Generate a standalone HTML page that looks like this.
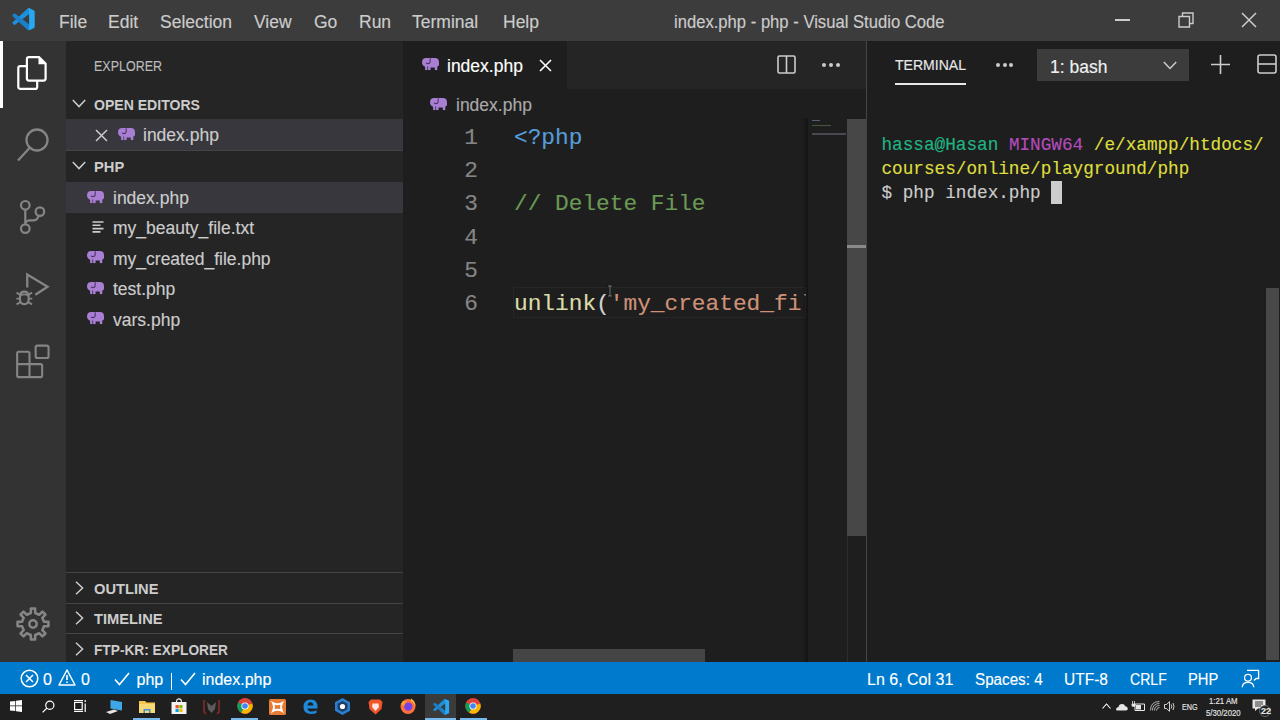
<!DOCTYPE html>
<html><head><meta charset="utf-8">
<style>
*{margin:0;padding:0;box-sizing:border-box}
html,body{width:1280px;height:720px;overflow:hidden;background:#1e1e1e;font-family:"Liberation Sans",sans-serif;color:#cccccc}
.a{position:absolute}
.t{position:absolute;white-space:nowrap;line-height:1;-webkit-text-stroke:0.15px currentColor}
.mono{font-family:"Liberation Mono",monospace}
svg{position:absolute;overflow:visible}
</style></head><body>

<!-- Title bar -->
<div class="a" style="left:0;top:0;width:1280px;height:41px;background:#3c3c3c"></div>
<svg width="0" height="0" style="position:absolute"><defs><symbol id="vsl" viewBox="0 0 100 100">
<path d="M96.46 10.80 L75.86 0.87 C73.48 -0.28 70.63 0.20 68.76 2.07 L1.33 63.55 C-0.48 65.20 -0.48 68.06 1.34 69.71 L6.85 74.72 C8.34 76.07 10.57 76.17 12.17 74.96 L93.38 13.36 C96.10 11.29 100 13.23 100 16.65 V16.41 C100 14.01 98.62 11.82 96.46 10.80 Z" fill="#1f8fdc"/>
<path d="M96.46 89.20 L75.86 99.13 C73.48 100.28 70.63 99.80 68.76 97.93 L1.33 36.45 C-0.48 34.80 -0.48 31.94 1.34 30.29 L6.85 25.28 C8.34 23.93 10.57 23.83 12.17 25.04 L93.38 86.64 C96.10 88.71 100 86.77 100 83.35 V83.59 C100 85.99 98.62 88.18 96.46 89.20 Z" fill="#1a80cc"/>
<path d="M75.86 99.13 C73.48 100.28 70.63 99.80 68.76 97.93 C71.06 100.23 75 98.60 75 95.34 V4.66 C75 1.40 71.06 -0.23 68.76 2.07 C70.63 0.20 73.48 -0.28 75.86 0.87 L96.46 10.79 C98.62 11.83 100 14.01 100 16.41 V83.59 C100 85.99 98.62 88.17 96.46 89.21 Z" fill="#29a8f2"/>
</symbol></defs></svg>
<svg style="left:12.4px;top:8.3px" width="23" height="22.4"><use href="#vsl"/></svg>
<div class="t" style="left:59px;top:13.5px;font-size:17.5px;color:#cccccc">File</div>
<div class="t" style="left:108px;top:13.5px;font-size:17.5px;color:#cccccc">Edit</div>
<div class="t" style="left:160px;top:13.5px;font-size:17.5px;color:#cccccc">Selection</div>
<div class="t" style="left:254px;top:13.5px;font-size:17.5px;color:#cccccc">View</div>
<div class="t" style="left:314px;top:13.5px;font-size:17.5px;color:#cccccc">Go</div>
<div class="t" style="left:359px;top:13.5px;font-size:17.5px;color:#cccccc">Run</div>
<div class="t" style="left:412px;top:13.5px;font-size:17.5px;color:#cccccc">Terminal</div>
<div class="t" style="left:503px;top:13.5px;font-size:17.5px;color:#cccccc">Help</div>
<div class="t" style="left:674px;top:13.5px;font-size:17.5px;color:#cccccc;transform-origin:0 0;transform:scaleX(0.95)">index.php - php - Visual Studio Code</div>
<!-- window controls -->
<div class="a" style="left:1114.5px;top:19.3px;width:15.5px;height:1.5px;background:#cccccc"></div>
<svg style="left:1178px;top:12px" width="16" height="16" viewBox="0 0 16 16"><path d="M1 4.5 H11.5 V15 H1 Z M4.5 4.5 V1 H15 V11.5 H11.5" fill="none" stroke="#cccccc" stroke-width="1.4"/></svg>
<svg style="left:1241px;top:12px" width="16" height="16" viewBox="0 0 16 16"><path d="M1 1 L15 15 M15 1 L1 15" stroke="#cccccc" stroke-width="1.5"/></svg>

<!-- Activity bar -->
<div class="a" style="left:0;top:41px;width:66px;height:621px;background:#333333"></div>
<div class="a" style="left:0;top:41px;width:2.5px;height:67px;background:#ffffff"></div>
<svg style="left:16px;top:55px" width="32" height="36" viewBox="0 0 32 36">
  <path d="M10.9 11.1 H4.3 A2 2 0 0 0 2.3 13.1 V31.9 A2 2 0 0 0 4.3 33.9 H19.2 A2 2 0 0 0 21.2 31.9 V25.6" fill="none" stroke="#fff" stroke-width="2.2"/>
  <path d="M10.9 4.1 A2 2 0 0 1 12.9 2.1 H23 L29.6 8.7 V23.6 A2 2 0 0 1 27.6 25.6 H12.9 A2 2 0 0 1 10.9 23.6 Z" fill="none" stroke="#fff" stroke-width="2.2"/>
  <path d="M22.5 2.5 V9.2 H29.2 Z" fill="#fff"/>
</svg>
<svg style="left:16px;top:127px" width="36" height="36" viewBox="0 0 36 36">
  <circle cx="21" cy="13" r="10.5" fill="none" stroke="#858585" stroke-width="2.3"/>
  <path d="M13.5 21 L2 33.5" stroke="#858585" stroke-width="2.3"/>
</svg>
<svg style="left:10px;top:190px" width="46" height="46" viewBox="10 190 46 46">
  <circle cx="25.3" cy="205.3" r="4.3" fill="none" stroke="#858585" stroke-width="2.2"/>
  <circle cx="25.3" cy="228.6" r="4.3" fill="none" stroke="#858585" stroke-width="2.2"/>
  <circle cx="39.9" cy="211.6" r="4.3" fill="none" stroke="#858585" stroke-width="2.2"/>
  <path d="M25.3 209.6 V224.3 M38.6 215.7 Q37.5 220.4 33 220.4 H29.5 Q25.6 220.6 25.3 224" fill="none" stroke="#858585" stroke-width="2.2"/>
</svg>
<svg style="left:10px;top:266px" width="46" height="46" viewBox="10 266 46 46">
  <path d="M27.25 287.6 V274.5 L47.6 286.8 L35.3 294.8" fill="none" stroke="#858585" stroke-width="2.3"/>
  <path d="M20 296.2 Q20 291.6 24.3 291.6 Q28.6 291.6 28.6 296.2 V299.6 Q28.6 304.2 24.3 304.2 Q20 304.2 20 299.6 Z" fill="none" stroke="#858585" stroke-width="2.1"/>
  <path d="M20.6 295.4 Q24.3 293.2 28 295.4" fill="none" stroke="#858585" stroke-width="1.8"/>
  <path d="M16.6 292.6 L20 294.8 M16.4 298.6 H20 M16.6 304.4 L20 302.2 M32 292.6 L28.6 294.8 M32.2 298.6 H28.6 M32 304.4 L28.6 302.2" fill="none" stroke="#858585" stroke-width="1.9"/>
</svg>
<svg style="left:10px;top:336px" width="46" height="46" viewBox="10 336 46 46">
  <path d="M17.15 353.5 Q17.15 351.75 18.9 351.75 H27.8 Q29.5 351.75 29.5 353.5 V364.1 H40.4 Q42.15 364.1 42.15 365.85 V375.4 Q42.15 377.15 40.4 377.15 H18.9 Q17.15 377.15 17.15 375.4 Z M17.15 364.1 H29.5 V377.15" fill="none" stroke="#858585" stroke-width="2.1"/>
  <rect x="35.65" y="345.65" width="12.9" height="12.3" rx="1.8" fill="none" stroke="#858585" stroke-width="2.1"/>
</svg>
<svg style="left:16px;top:607px" width="34" height="34" viewBox="0 0 34 34">
  <path d="M14.81 6.02 L14.92 1.54 L19.08 1.54 L19.19 6.02 L23.22 7.69 L26.46 4.60 L29.40 7.54 L26.31 10.78 L27.98 14.81 L32.46 14.92 L32.46 19.08 L27.98 19.19 L26.31 23.22 L29.40 26.46 L26.46 29.40 L23.22 26.31 L19.19 27.98 L19.08 32.46 L14.92 32.46 L14.81 27.98 L10.78 26.31 L7.54 29.40 L4.60 26.46 L7.69 23.22 L6.02 19.19 L1.54 19.08 L1.54 14.92 L6.02 14.81 L7.69 10.78 L4.60 7.54 L7.54 4.60 L10.78 7.69 Z" fill="none" stroke="#858585" stroke-width="2.6" stroke-linejoin="round"/>
  <circle cx="17" cy="17" r="3.7" fill="none" stroke="#858585" stroke-width="2.5"/>
</svg>

<!-- Sidebar -->
<div class="a" style="left:66px;top:41px;width:337px;height:621px;background:#252526"></div>
<div class="t" style="left:94px;top:58.5px;font-size:14.7px;color:#bbbbbb;transform-origin:0 0;transform:scaleX(0.85)">EXPLORER</div>

<svg width="0" height="0" style="position:absolute"><defs>
<symbol id="el" viewBox="0 0 17 12.2">
<path d="M4.3 0 H13 Q17 0 17 4.2 V6.8 Q17 8.3 15.3 8.6 V12.2 H12.8 V9.4 H8.6 V12.2 H6.1 V8.4 H5.4 V12.2 H3.1 V8.8 Q0 7.8 0 4.3 Q0 0 4.3 0 Z" fill="#a87fd2"/>
<path d="M8.2 0.2 V3.2 Q8.2 5.6 5.6 5.6 Q4.4 5.6 4 4.8" fill="none" stroke="#4e3569" stroke-width="1.1"/>
</symbol>
</defs></svg>

<!-- OPEN EDITORS -->
<svg style="left:72px;top:99px" width="14" height="9" viewBox="0 0 14 9"><path d="M0.8 1 L7 7.6 L13.2 1" fill="none" stroke="#cccccc" stroke-width="1.5"/></svg>
<div class="t" style="left:94px;top:98px;font-size:14.7px;font-weight:bold;-webkit-text-stroke:0;color:#cccccc;transform-origin:0 0;transform:scaleX(0.957)">OPEN EDITORS</div>
<div class="a" style="left:66px;top:119px;width:337px;height:31px;background:#37373d"></div>
<svg style="left:95px;top:129px" width="13" height="13" viewBox="0 0 13 13"><path d="M1 1 L12 12 M12 1 L1 12" stroke="#cccccc" stroke-width="1.5"/></svg>
<svg style="left:117.8px;top:128px" width="17" height="12.2"><use href="#el"/></svg>
<div class="t" style="left:143px;top:127px;font-size:17.5px;color:#cccccc">index.php</div>
<div class="a" style="left:66px;top:150px;width:337px;height:1px;background:#454547"></div>

<!-- PHP -->
<svg style="left:72px;top:161px" width="14" height="9" viewBox="0 0 14 9"><path d="M0.8 1 L7 7.6 L13.2 1" fill="none" stroke="#cccccc" stroke-width="1.5"/></svg>
<div class="t" style="left:94px;top:160px;font-size:14.7px;font-weight:bold;-webkit-text-stroke:0;color:#cccccc">PHP</div>
<div class="a" style="left:66px;top:182px;width:337px;height:31px;background:#37373d"></div>
<svg style="left:87px;top:190.5px" width="17" height="12.2"><use href="#el"/></svg>
<div class="t" style="left:113px;top:190px;font-size:17.5px;color:#cccccc">index.php</div>
<svg style="left:92px;top:221px" width="12" height="13" viewBox="0 0 12 13"><path d="M0.5 1 H11.5 M0.5 4.3 H8.5 M0.5 7.6 H11.5 M0.5 10.9 H8.5" stroke="#cccccc" stroke-width="1.6"/></svg>
<div class="t" style="left:113px;top:220px;font-size:17.5px;color:#cccccc">my_beauty_file.txt</div>
<svg style="left:87px;top:251px" width="17" height="12.2"><use href="#el"/></svg>
<div class="t" style="left:113px;top:251px;font-size:17.5px;color:#cccccc">my_created_file.php</div>
<svg style="left:87px;top:281.5px" width="17" height="12.2"><use href="#el"/></svg>
<div class="t" style="left:113px;top:281px;font-size:17.5px;color:#cccccc">test.php</div>
<svg style="left:87px;top:311.8px" width="17" height="12.2"><use href="#el"/></svg>
<div class="t" style="left:113px;top:312px;font-size:17.5px;color:#cccccc">vars.php</div>

<!-- bottom sections -->
<div class="a" style="left:66px;top:572px;width:337px;height:1px;background:#454547"></div>
<svg style="left:75px;top:581px" width="9" height="14" viewBox="0 0 9 14"><path d="M1 0.8 L7.6 7 L1 13.2" fill="none" stroke="#cccccc" stroke-width="1.5"/></svg>
<div class="t" style="left:94px;top:581.8px;font-size:14.7px;font-weight:bold;-webkit-text-stroke:0;color:#cccccc">OUTLINE</div>
<div class="a" style="left:66px;top:603px;width:337px;height:1px;background:#454547"></div>
<svg style="left:75px;top:611px" width="9" height="14" viewBox="0 0 9 14"><path d="M1 0.8 L7.6 7 L1 13.2" fill="none" stroke="#cccccc" stroke-width="1.5"/></svg>
<div class="t" style="left:94px;top:611.8px;font-size:14.7px;font-weight:bold;-webkit-text-stroke:0;color:#cccccc">TIMELINE</div>
<div class="a" style="left:66px;top:633px;width:337px;height:1px;background:#454547"></div>
<svg style="left:75px;top:642px" width="9" height="14" viewBox="0 0 9 14"><path d="M1 0.8 L7.6 7 L1 13.2" fill="none" stroke="#cccccc" stroke-width="1.5"/></svg>
<div class="t" style="left:94px;top:642.8px;font-size:14.7px;font-weight:bold;-webkit-text-stroke:0;color:#cccccc;transform-origin:0 0;transform:scaleX(0.933)">FTP-KR: EXPLORER</div>

<!-- Editor -->
<div class="a" style="left:403px;top:41px;width:463px;height:48px;background:#252526"></div>
<div class="a" style="left:403px;top:41px;width:164px;height:48px;background:#1e1e1e"></div>
<svg style="left:421.6px;top:58.3px" width="17" height="12.2"><use href="#el"/></svg>
<div class="t" style="left:447px;top:58px;font-size:17.5px;color:#ffffff">index.php</div>
<svg style="left:539px;top:59px" width="13" height="13" viewBox="0 0 13 13"><path d="M1 1 L12 12 M12 1 L1 12" stroke="#ffffff" stroke-width="1.6"/></svg>
<svg style="left:777px;top:55px" width="19" height="19" viewBox="0 0 19 19"><rect x="1" y="1" width="17" height="17" rx="1.5" fill="none" stroke="#cccccc" stroke-width="1.6"/><path d="M9.5 1 V18" stroke="#cccccc" stroke-width="1.6"/></svg>
<div class="a" style="left:822px;top:63px;width:4px;height:4px;border-radius:2px;background:#cccccc"></div>
<div class="a" style="left:829px;top:63px;width:4px;height:4px;border-radius:2px;background:#cccccc"></div>
<div class="a" style="left:836px;top:63px;width:4px;height:4px;border-radius:2px;background:#cccccc"></div>

<svg style="left:430px;top:97.8px" width="17" height="12.2"><use href="#el"/></svg>
<div class="t" style="left:456px;top:97.2px;font-size:17.5px;color:#a9a9a9">index.php</div>

<div class="t mono" style="left:440px;top:126.5px;width:38px;text-align:right;font-size:22.8px;color:#858585">1</div>
<div class="t mono" style="left:440px;top:159.5px;width:38px;text-align:right;font-size:22.8px;color:#858585">2</div>
<div class="t mono" style="left:440px;top:192.5px;width:38px;text-align:right;font-size:22.8px;color:#858585">3</div>
<div class="t mono" style="left:440px;top:226.5px;width:38px;text-align:right;font-size:22.8px;color:#858585">4</div>
<div class="t mono" style="left:440px;top:259.5px;width:38px;text-align:right;font-size:22.8px;color:#858585">5</div>
<div class="t mono" style="left:440px;top:292.5px;width:38px;text-align:right;font-size:22.8px;color:#858585">6</div>

<div class="a" style="left:513px;top:287px;width:293px;height:31px;border:1.5px solid #262626"></div>
<div class="t mono" style="left:514px;top:126.5px;font-size:22.8px;color:#569cd6">&lt;?php</div>
<div class="t mono" style="left:514px;top:192.5px;font-size:22.8px;color:#6a9955">// Delete File</div>
<div class="a" style="left:514px;top:280px;width:292px;height:45px;overflow:hidden">
<div class="t mono" style="left:0;top:12.5px;font-size:22.8px;color:#dcdcaa">unlink<span style="color:#d4d4d4">(</span><span style="color:#ce9178">'my_created_file.php'</span><span style="color:#d4d4d4">);</span></div>
</div>

<svg style="left:606px;top:285px" width="8" height="12" viewBox="0 0 8 12"><path d="M1.5 1 H6.5 M4 1 V11 M1.5 11 H6.5" stroke="#0a0a0a" stroke-width="2.2" opacity=".8"/><path d="M2 1 H6 M4 1 V11 M2 11 H6" stroke="#9a9a9a" stroke-width="0.8"/></svg>
<!-- minimap & scrollbar -->
<div class="a" style="left:802px;top:118px;width:6px;height:544px;background:linear-gradient(to right,rgba(0,0,0,0),rgba(0,0,0,0.35))"></div>
<div class="a" style="left:812px;top:119.5px;width:8px;height:1.5px;background:#6f8fb0;opacity:.6"></div>
<div class="a" style="left:812px;top:124.8px;width:19px;height:1.5px;background:#6f8f60;opacity:.5"></div>
<div class="a" style="left:812px;top:133.2px;width:34px;height:1.5px;background:#8a8aa0;opacity:.4"></div>
<div class="a" style="left:846.5px;top:118.5px;width:19.5px;height:417px;background:#474747"></div>
<div class="a" style="left:846.5px;top:245px;width:19.5px;height:3px;background:#8a8a8a"></div>
<div class="a" style="left:513px;top:649px;width:192px;height:13px;background:#454545"></div>
<div class="a" style="left:846.5px;top:535.5px;width:1px;height:126.5px;background:#2e2e2e"></div>

<!-- divider -->
<div class="a" style="left:866px;top:41px;width:1px;height:621px;background:#454545"></div>


<!-- Terminal panel -->
<div class="t" style="left:895px;top:58px;font-size:14.7px;color:#e7e7e7;transform-origin:0 0;transform:scaleX(0.956)">TERMINAL</div>
<div class="a" style="left:895px;top:83px;width:71px;height:2px;background:#e7e7e7"></div>
<div class="a" style="left:996px;top:63px;width:4px;height:4px;border-radius:2px;background:#cccccc"></div>
<div class="a" style="left:1002.5px;top:63px;width:4px;height:4px;border-radius:2px;background:#cccccc"></div>
<div class="a" style="left:1009px;top:63px;width:4px;height:4px;border-radius:2px;background:#cccccc"></div>
<div class="a" style="left:1037px;top:49px;width:152px;height:32px;background:#3c3c3c"></div>
<div class="t" style="left:1050px;top:58.5px;font-size:17.5px;color:#f0f0f0">1: bash</div>
<svg style="left:1163px;top:61px" width="14" height="9" viewBox="0 0 14 9"><path d="M0.8 1 L7 7.4 L13.2 1" fill="none" stroke="#cccccc" stroke-width="1.5"/></svg>
<svg style="left:1211px;top:55px" width="19" height="19" viewBox="0 0 19 19"><path d="M9.5 0 V19 M0 9.5 H19" stroke="#cccccc" stroke-width="1.6"/></svg>
<svg style="left:1257px;top:54px" width="20" height="20" viewBox="0 0 20 20"><rect x="1" y="1" width="18" height="18" rx="2" fill="none" stroke="#cccccc" stroke-width="1.6"/><path d="M1 10 H19" stroke="#cccccc" stroke-width="1.6"/></svg>

<div class="t mono" style="left:881.5px;top:136.5px;font-size:17.7px;color:#1fb583">hassa@Hasan <span style="color:#b24cbb">MINGW64</span> <span style="color:#dddd3e">/e/xampp/htdocs/</span></div>
<div class="t mono" style="left:881.5px;top:160.8px;font-size:17.7px;color:#dddd3e">courses/online/playground/php</div>
<div class="t mono" style="left:881.5px;top:184.8px;font-size:17.7px;color:#cccccc">$ php index.php </div>
<div class="a" style="left:1051px;top:181px;width:11px;height:23px;background:#cccccc"></div>
<div class="a" style="left:1266px;top:287.5px;width:13px;height:372.5px;background:#484848"></div>

<!-- Status bar -->
<div class="a" style="left:0;top:662px;width:1280px;height:32px;background:#007acc"></div>
<svg style="left:20px;top:669px" width="19" height="19" viewBox="0 0 19 19"><circle cx="9.5" cy="9.5" r="8.3" fill="none" stroke="#fff" stroke-width="1.5"/><path d="M6 6 L13 13 M13 6 L6 13" stroke="#fff" stroke-width="1.5"/></svg>
<div class="t" style="left:43px;top:672px;font-size:16px;color:#ffffff">0</div>
<svg style="left:58px;top:669px" width="18" height="17" viewBox="0 0 18 17"><path d="M9 1 L17 16 H1 Z" fill="none" stroke="#fff" stroke-width="1.5" stroke-linejoin="round"/><path d="M9 6 V11 M9 12.5 V14" stroke="#fff" stroke-width="1.6"/></svg>
<div class="t" style="left:81px;top:672px;font-size:16px;color:#ffffff">0</div>
<svg style="left:114px;top:672px" width="16" height="14" viewBox="0 0 16 14"><path d="M1 7.5 L5.5 12.5 L15 1" fill="none" stroke="#fff" stroke-width="1.6"/></svg>
<div class="t" style="left:136.5px;top:672px;font-size:16px;color:#ffffff">php</div>
<div class="a" style="left:171px;top:672.5px;width:1.3px;height:17.5px;background:#fff"></div>
<svg style="left:180px;top:672px" width="16" height="14" viewBox="0 0 16 14"><path d="M1 7.5 L5.5 12.5 L15 1" fill="none" stroke="#fff" stroke-width="1.6"/></svg>
<div class="t" style="left:202px;top:672px;font-size:16px;color:#ffffff">index.php</div>
<div class="t" style="left:867px;top:672px;font-size:16px;color:#ffffff">Ln 6, Col 31</div>
<div class="t" style="left:975px;top:672px;font-size:16px;color:#ffffff;transform-origin:0 0;transform:scaleX(0.95)">Spaces: 4</div>
<div class="t" style="left:1064px;top:672px;font-size:16px;color:#ffffff;transform-origin:0 0;transform:scaleX(0.97)">UTF-8</div>
<div class="t" style="left:1130px;top:672px;font-size:16px;color:#ffffff;transform-origin:0 0;transform:scaleX(0.88)">CRLF</div>
<div class="t" style="left:1188px;top:672px;font-size:16px;color:#ffffff;transform-origin:0 0;transform:scaleX(0.92)">PHP</div>
<svg style="left:1240px;top:668px" width="22" height="22" viewBox="1240 668 22 22"><path d="M1247 670.3 H1258.6 V678.5 H1256.2 L1253.8 680.6" fill="none" stroke="#fff" stroke-width="1.3"/><circle cx="1248" cy="677.8" r="3.4" fill="none" stroke="#fff" stroke-width="1.3"/><path d="M1242.2 687.2 Q1242.6 682.3 1248 682.3 Q1253.4 682.3 1253.8 687.2" fill="none" stroke="#fff" stroke-width="1.3"/></svg>

<!-- Taskbar -->
<div class="a" style="left:0;top:694px;width:1280px;height:26px;background:#1f1f1f"></div>

<!-- taskbar icons -->
<svg style="left:10px;top:700px" width="12" height="12" viewBox="0 0 12 12"><path d="M0 1.6 L5.3 0.9 V5.6 H0 Z M6 0.8 L12 0 V5.6 H6 Z M0 6.3 H5.3 V11.1 L0 10.4 Z M6 6.3 H12 V12 L6 11.2 Z" fill="#ffffff"/></svg>
<svg style="left:42px;top:700px" width="13" height="13" viewBox="0 0 13 13"><circle cx="7.8" cy="5.2" r="4.1" fill="none" stroke="#fff" stroke-width="1.2"/><path d="M4.9 8.1 L0.6 12.4" stroke="#fff" stroke-width="1.3"/></svg>
<svg style="left:74px;top:700px" width="13" height="12" viewBox="0 0 13 12"><path d="M0.6 2.5 H8.2 V9.5 H0.6 Z" fill="none" stroke="#fff" stroke-width="1.2"/><path d="M0 0.6 H9 M0 11.4 H9 M11.2 0 V2 M11.2 3.5 V12" stroke="#fff" stroke-width="1.2"/></svg>
<svg style="left:106px;top:699px" width="17" height="16" viewBox="0 0 17 16"><path d="M4.5 1 L16 3 V11.5 L4.5 9.5 Z" fill="#3fa7e8"/><path d="M0 13 L8 10.5 L12 12 L4 15 Z" fill="#e6e6e6"/></svg>
<svg style="left:139px;top:700px" width="16" height="13" viewBox="0 0 16 13"><path d="M0 1 H6 L7.5 2.5 H16 V13 H0 Z" fill="#f3c64b"/><path d="M0 4 H16 V13 H0 Z" fill="#f8d775"/><path d="M4.5 9 H11.5 V13 H10 V10.5 H6 V13 H4.5 Z" fill="#3d8fd6"/></svg>
<div class="a" style="left:133px;top:718px;width:27px;height:2px;background:#76b9ed"></div>
<svg style="left:171px;top:698px" width="16" height="16" viewBox="0 0 16 16"><path d="M5.5 4 Q5.5 0.8 8 0.8 Q10.5 0.8 10.5 4" fill="none" stroke="#e6e6e6" stroke-width="1.2"/><rect x="0.5" y="4" width="15" height="12" fill="#f2f2f2"/><rect x="4.5" y="7" width="3.2" height="3.2" fill="#f25022"/><rect x="8.3" y="7" width="3.2" height="3.2" fill="#7fba00"/><rect x="4.5" y="10.8" width="3.2" height="3.2" fill="#00a4ef"/><rect x="8.3" y="10.8" width="3.2" height="3.2" fill="#ffb900"/></svg>
<svg style="left:203px;top:699px" width="17" height="16" viewBox="0 0 17 16"><path d="M1 1 V13 L3 15 M16 1 V13 L14 15" fill="none" stroke="#8b2a2a" stroke-width="1.6"/><path d="M4 3 L8.5 7 L13 3 L12 10 L8.5 14 L5 10 Z" fill="#5c5c5c"/></svg>
<svg style="left:237px;top:698px" width="16" height="16" viewBox="0 0 16 16"><circle cx="8" cy="8" r="7.7" fill="#db4437"/><path d="M8 8 L1.3 4.2 A7.7 7.7 0 0 0 4.2 14.7 Z" fill="#0f9d58"/><path d="M8 8 L4.2 14.7 A7.7 7.7 0 0 0 15.3 5.6 L8 4.2 Z" fill="#f4b400"/><path d="M8 8 L1.3 4.2 A7.7 7.7 0 0 1 15.3 5.6 Z" fill="#db4437"/><circle cx="8" cy="8" r="3.6" fill="#fff"/><circle cx="8" cy="8" r="2.8" fill="#4285f4"/></svg>
<div class="a" style="left:231px;top:718px;width:27px;height:2px;background:#76b9ed"></div>
<svg style="left:269px;top:699px" width="17" height="16" viewBox="0 0 17 16"><rect x="0" y="0" width="17" height="16" rx="1.5" fill="#e97b32"/><path d="M4 4 Q8.5 6.5 13 4 Q11 8 13 12 Q8.5 9.5 4 12 Q6 8 4 4 Z" fill="none" stroke="#fff" stroke-width="1.8"/></svg>
<svg style="left:303px;top:699px" width="15" height="15" viewBox="0 0 15 15"><path d="M14.5 9.5 H4.5 Q4.8 12.6 8.5 12.6 Q11.5 12.6 13.5 11.3 V14 Q11.5 15 8 15 Q0.5 15 0.5 8 Q0.5 0.5 8 0.5 Q14.5 0.5 14.5 8 Z M4.5 6.5 H10.3 Q10 3.3 7.4 3.3 Q4.9 3.3 4.5 6.5 Z" fill="#1e88d9" fill-rule="evenodd"/></svg>
<svg style="left:335px;top:698px" width="15" height="17" viewBox="0 0 15 17"><path d="M7.5 0 L15 4.25 V12.75 L7.5 17 L0 12.75 V4.25 Z" fill="#2a7fd1"/><path d="M7.5 3 L12.5 5.8 V11.2 L7.5 14 L2.5 11.2 V5.8 Z" fill="#1d3e66"/><circle cx="7.5" cy="8.5" r="2.6" fill="#ffffff"/></svg>
<svg style="left:368px;top:699px" width="15" height="16" viewBox="0 0 15 16"><path d="M3 0.5 H12 L14.5 3 L13.5 10 L7.5 15.5 L1.5 10 L0.5 3 Z" fill="#f1562b"/><path d="M4.5 4.5 H10.5 L11 8 L7.5 12 L4 8 Z" fill="#fff" opacity=".85"/></svg>
<svg style="left:400px;top:698px" width="16" height="16" viewBox="0 0 16 16"><circle cx="8" cy="8.5" r="7.5" fill="#ff7139"/><path d="M11 0.5 Q15.5 3 15.5 8.5 Q14 4 11 3 Z" fill="#ffbd4f"/><circle cx="8.3" cy="8.6" r="4.2" fill="#7542e5"/><path d="M1 6 Q3 2 7 3.5 Q4 4.5 4.5 8 Z" fill="#ffa436"/></svg>
<div class="a" style="left:425px;top:694px;width:31px;height:26px;background:#3b3b3b"></div>
<svg style="left:432.5px;top:699px" width="16.5" height="16"><use href="#vsl"/></svg>
<div class="a" style="left:425px;top:718px;width:31px;height:2px;background:#76b9ed"></div>
<svg style="left:465px;top:698px" width="16" height="16" viewBox="0 0 16 16"><circle cx="8" cy="8" r="7.7" fill="#db4437"/><path d="M8 8 L1.3 4.2 A7.7 7.7 0 0 0 4.2 14.7 Z" fill="#0f9d58"/><path d="M8 8 L4.2 14.7 A7.7 7.7 0 0 0 15.3 5.6 L8 4.2 Z" fill="#f4b400"/><path d="M8 8 L1.3 4.2 A7.7 7.7 0 0 1 15.3 5.6 Z" fill="#db4437"/><circle cx="8" cy="8" r="3.6" fill="#fff"/><circle cx="8" cy="8" r="2.8" fill="#4285f4"/></svg>
<div class="a" style="left:460px;top:718px;width:27px;height:2px;background:#76b9ed"></div>

<!-- tray -->
<svg style="left:1102px;top:703px" width="9" height="6" viewBox="0 0 9 6"><path d="M0.5 5.5 L4.5 1 L8.5 5.5" fill="none" stroke="#fff" stroke-width="1.1"/></svg>
<svg style="left:1116px;top:702px" width="12" height="9" viewBox="0 0 12 9"><path d="M1 8.5 Q-0.5 8.5 0.3 6.5 Q1 5 2.5 5.3 Q3 2 6 2 Q8.5 2 9.3 4.3 Q11.8 4.5 11.8 6.7 Q11.8 8.5 10 8.5 Z" fill="#e6e6e6"/></svg>
<svg style="left:1132px;top:701px" width="13" height="10" viewBox="0 0 13 10"><path d="M3 3 H12.5 V9.5 H3 Z" fill="none" stroke="#e6e6e6" stroke-width="1"/><path d="M4 4 H9 V8.5 H4 Z" fill="#e6e6e6"/><path d="M0.5 0 V3 M2.5 0 V3 M0 3 H3 V5 Q1.5 6 0 5 Z" stroke="#e6e6e6" stroke-width="0.8" fill="#e6e6e6"/></svg>
<svg style="left:1150px;top:701px" width="10" height="10" viewBox="0 0 10 10"><path d="M0.5 9.5 Q0.5 0.5 9.5 0.5 M2.5 9.5 Q2.5 2.5 9.5 2.5 M4.5 9.5 Q4.5 4.5 9.5 4.5 M6.5 9.5 Q6.5 6.5 9.5 6.5" fill="none" stroke="#bdbdbd" stroke-width="0.9"/></svg>
<svg style="left:1164px;top:701px" width="11" height="11" viewBox="0 0 11 11"><path d="M0.5 3.5 H2.5 L5.5 0.7 V10.3 L2.5 7.5 H0.5 Z" fill="none" stroke="#e6e6e6" stroke-width="0.9"/><path d="M7.2 3.5 Q8.3 5.5 7.2 7.5 M9 2 Q11 5.5 9 9" fill="none" stroke="#e6e6e6" stroke-width="0.9"/></svg>
<div class="t" style="left:1182px;top:702px;font-size:9.5px;color:#e6e6e6;transform-origin:0 0;transform:scaleX(0.76)">ENG</div>
<div class="t" style="left:1209px;top:696px;font-size:9.5px;color:#e6e6e6;transform-origin:0 0;transform:scaleX(0.82)">1:21 AM</div>
<div class="t" style="left:1206px;top:707.5px;font-size:9.5px;color:#e6e6e6;transform-origin:0 0;transform:scaleX(0.82)">5/30/2020</div>
<svg style="left:1252px;top:699px" width="19" height="18" viewBox="0 0 19 18"><path d="M0.5 0.5 H13.5 V9.5 H6 L3 12 V9.5 H0.5 Z" fill="#e6e6e6"/><path d="M3 3 H11 M3 5 H11 M3 7 H9" stroke="#1f1f1f" stroke-width="0.9"/><circle cx="13" cy="12" r="5.5" fill="#1f1f1f" stroke="#7a7a7a" stroke-width="0.8"/></svg>
<div class="t" style="left:1261px;top:707px;font-size:9px;font-weight:bold;color:#e6e6e6">22</div>

</body></html>
